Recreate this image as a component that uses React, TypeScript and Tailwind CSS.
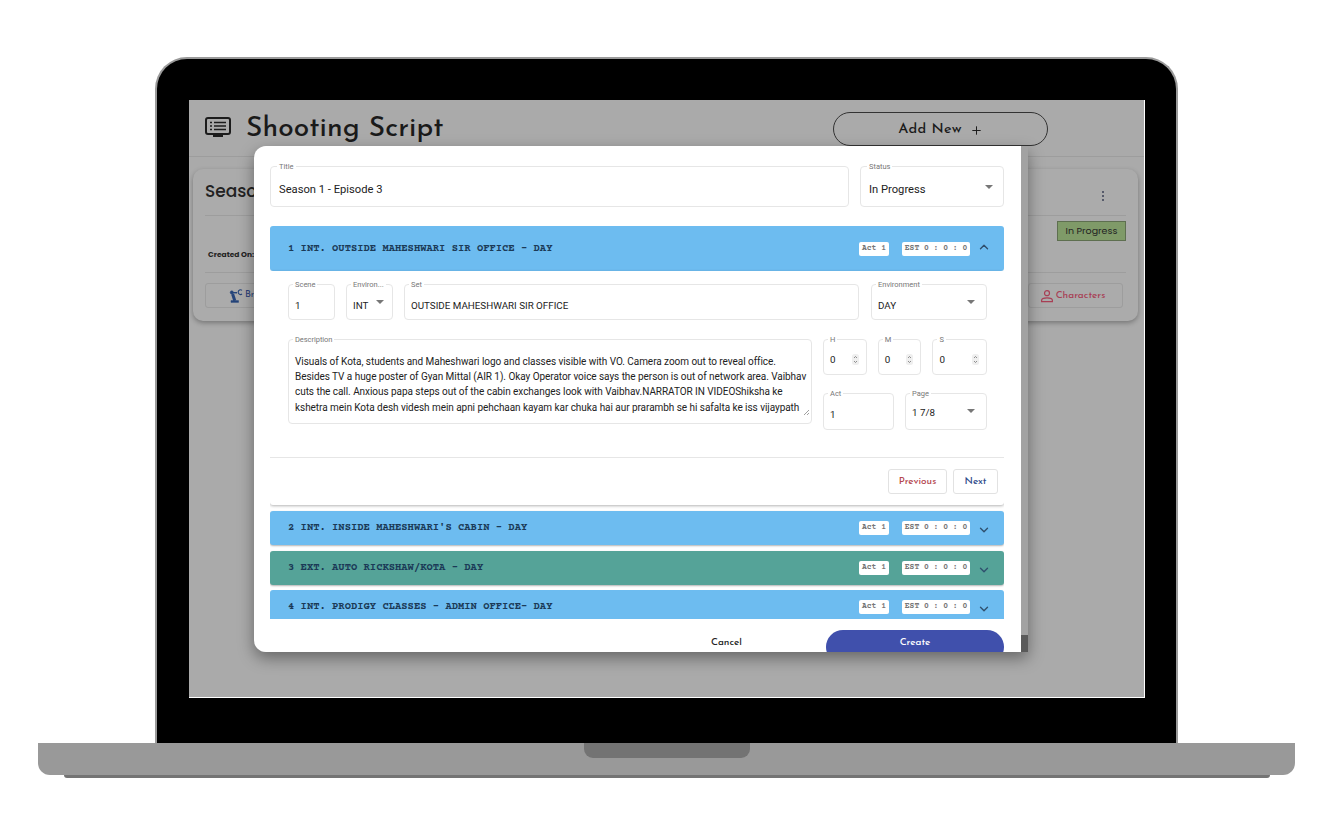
import React from "react";
import { ChevronDown, ChevronUp, Plus } from "lucide-react";

const roboto = "font-['Roboto','Liberation_Sans',sans-serif]";
const mono = "font-['Courier_Prime','Courier_New','Liberation_Mono',monospace]";
const geo = "font-['Josefin_Sans','Lato','Noto_Sans',sans-serif]";

function Caret({ className = "" }: { className?: string }) {
  return <span className={`block shrink-0 w-0 h-0 border-l-[4px] border-r-[4px] border-t-[4px] border-l-transparent border-r-transparent border-t-[#777] ${className}`} />;
}

function Spin() {
  return (
    <svg width="7" height="11" viewBox="0 0 7 11" fill="none" className="shrink-0 -mt-[1px]">
      <rect width="7" height="11" rx="2.5" fill="#efefef" />
      <path d="M2 4 3.5 2.5 5 4M2 7l1.5 1.5L5 7" stroke="#666" strokeWidth="0.7" />
    </svg>
  );
}

function Field({ label, className, children, size = "text-[9.8px]", pad = "pl-[6px] pr-[7px]", labelLeft = "left-[4px]" }: { label: string; className: string; children: React.ReactNode; size?: string; pad?: string; labelLeft?: string }) {
  return (
    <div className={`relative border border-[#e6e6e6] rounded-[4px] flex items-center ${pad} ${roboto} ${size} text-[#222] ${className}`}>
      <span className={`absolute -top-[5px] ${labelLeft} bg-white px-[2px] text-[7.5px] leading-[10px] text-[#777] whitespace-nowrap`}>{label}</span>
      {children}
    </div>
  );
}

function Chip({ children, className }: { children: React.ReactNode; className: string }) {
  return <span className={`h-[14px] bg-white rounded-[2px] flex items-center justify-center font-bold text-[8px] text-[#777] whitespace-pre ${className}`}>{children}</span>;
}

function SceneBar({ text, color, className, open }: { text: string; color: string; className: string; open?: boolean }) {
  return (
    <div className={`flex items-center pl-[18px] pr-[13px] rounded-[3px] shrink-0 ${color} ${className} ${mono}`}>
      <span className="text-[10.5px] font-bold text-[#1b3a57] whitespace-pre flex-1 mt-[2px]">{text}</span>
      <Chip className="w-[30px] mr-[13px]">Act 1</Chip>
      <Chip className="w-[68px] mr-[7px]">EST 0 : 0 : 0</Chip>
      {open ? <ChevronUp size={14} strokeWidth={2.4} className="text-[#30506e] -mt-[3px]" /> : <ChevronDown size={14} strokeWidth={2.4} className="text-[#30506e] mt-[4px]" />}
    </div>
  );
}

export default function App() {
  return (
    <div className="w-[1338px] h-[838px] bg-white overflow-hidden pt-[57px]">
      {/* lid */}
      <div className="ml-[155px] w-[1023px] h-[686px] bg-black border-t-[2px] border-x-[2px] border-[#9a9a9a] rounded-t-[32px] pt-[41px] pl-[32px]">
        {/* screen */}
        <div className="relative w-[956px] h-[598px] bg-[#aaaaaa] border-r border-b border-white overflow-hidden">
          <div className="flex items-center h-[57px] border-b border-[#9d9d9d] pl-[16px] pr-[96px]">
            <svg width="26" height="22" viewBox="0 0 26 22" fill="none" className="text-[#1c1c1c] -mt-[3px]">
              <rect x="1" y="2" width="24" height="16" rx="2" stroke="currentColor" strokeWidth="2" />
              <path d="M5 6.5h2M5 10h2M5 13.5h2M9 6.5h12M9 10h12M9 13.5h12" stroke="currentColor" strokeWidth="1.7" />
              <path d="M8 18h10v3H8z" fill="currentColor" />
            </svg>
            <span className={`ml-[15px] mt-[1px] text-[28px] font-medium tracking-[0.1px] text-[#1a1a1a] ${geo}`}>Shooting Script</span>
            <div className={`ml-auto mt-[2px] w-[215px] h-[34px] rounded-full border border-[#333] flex items-center justify-center gap-[8px] text-[14.5px] font-medium tracking-[0.3px] text-[#1a1a1a] ${geo}`}>
              <span className="mt-[1px]">Add New</span> <Plus size={13} strokeWidth={1.8} className="mt-[2px]" />
            </div>
          </div>
          <div className="ml-[4px] mt-[12px] w-[945px] h-[152px] rounded-[10px] bg-[#ababab] shadow-[0_2px_5px_rgba(0,0,0,0.3)] px-[12px] font-['Poppins','Inter',sans-serif]">
            <div className="flex items-center justify-between h-[47px] border-b border-[#9d9d9d] pr-[22px]">
              <span className="text-[17px] font-medium text-[#222]">Season 1</span>
              <span className="flex flex-col gap-[1.5px] mt-[8px]">
                <i className="block w-[2.5px] h-[2.5px] rounded-full bg-[#3a3f55]" />
                <i className="block w-[2.5px] h-[2.5px] rounded-full bg-[#3a3f55]" />
                <i className="block w-[2.5px] h-[2.5px] rounded-full bg-[#3a3f55]" />
              </span>
            </div>
            <div className="flex justify-between h-[57px] border-b border-[#9d9d9d]">
              <span className="mt-[33px] ml-[3px] text-[7.5px] font-bold text-[#222]">Created On:</span>
              <span className="mt-[5px] mr-0 w-[69px] h-[20px] bg-[#7f9a68] border border-[#5e6f50] flex items-center justify-center text-[9.5px] text-[#222]">In Progress</span>
            </div>
            <div className="flex justify-between items-center pt-[10px]">
              <div className={`w-[100px] h-[25px] border border-[#9d9d9d] rounded-[3px] flex items-center pl-[23px] text-[9.5px] text-[#2c3f78] ${geo}`}>
                <svg width="15" height="14" viewBox="0 0 15 14" fill="none" stroke="#25447a">
                  <path d="M2 13.4h7.5v-1.8H2z" fill="#25447a" strokeWidth="0.5" />
                  <path d="M5.8 11.8 3.6 5" strokeWidth="3" />
                  <circle cx="2.8" cy="3.4" r="1.6" fill="#25447a" strokeWidth="0.5" />
                  <path d="M2.8 3.6 8 3.8" strokeWidth="1.4" />
                  <path d="M13 1.4A2.3 2.3 0 0 0 9.2 3.2 2.3 2.3 0 0 0 13 5" strokeWidth="1.1" />
                </svg>
                <span className="ml-[1px]">Breakdown</span>
              </div>
              <div className={`w-[95px] h-[25px] mr-[3px] border border-[#9d9d9d] rounded-[3px] flex items-center justify-center gap-[2px] pr-[6px] text-[10px] font-medium text-[#a83f55] ${geo}`}>
                <svg width="14" height="14" viewBox="0 0 14 14" fill="none" stroke="currentColor" strokeWidth="1.2">
                  <circle cx="7" cy="4.2" r="2.5" />
                  <path d="M1.6 12.6v-1.2c0-1.5 2.6-2.5 5.4-2.5s5.4 1 5.4 2.5v1.2z" />
                </svg>
                Characters
              </div>
            </div>
          </div>

          {/* modal */}
          <div className="absolute left-[65px] top-[46px] w-[774px] h-[506px] flex shadow-[0_6px_16px_rgba(0,0,0,0.4)] rounded-l-[12px] overflow-hidden">
            <div className="w-[767px] h-full bg-white flex flex-col pl-[16px] pr-[17px] relative">
              <div className="flex gap-[11px] pt-[20px] shrink-0">
                <Field label="Title" labelLeft="left-[6px]" className="w-[579px] h-[41px] pt-[8px]" pad="pl-[8px] pr-[8px]" size="text-[11.2px]"><span>Season 1 - Episode 3</span></Field>
                <Field label="Status" labelLeft="left-[6px]" className="w-[144px] h-[41px] justify-between pt-[8px]" pad="pl-[8px] pr-[10px]" size="text-[11.2px]"><span>In Progress</span><Caret className="-mt-[7px]" /></Field>
              </div>
              <div className="h-[393px] overflow-hidden mt-[19px]">
                <SceneBar text="1 INT. OUTSIDE MAHESHWARI SIR OFFICE - DAY" color="bg-[#6dbcf0]" className="h-[45px]" open />
                <div className="h-[234px] bg-white shadow-[0_1px_3px_rgba(0,0,0,0.3)] rounded-b-[3px] flex flex-col">
                  <div className="flex gap-[11px] pt-[13px] pl-[18px]">
                    <Field label="Scene" className="w-[47px] h-[36px] pt-[8px]">1</Field>
                    <Field label="Environ..." className="w-[47px] h-[36px] justify-between pt-[8px]"><span>INT</span><Caret className="-mt-[9px] mr-[1px]" /></Field>
                    <Field label="Set" className="w-[455px] h-[36px] pt-[8px]">OUTSIDE MAHESHWARI SIR OFFICE</Field>
                    <Field label="Environment" className="w-[116px] h-[36px] justify-between ml-[1px] pt-[8px]"><span>DAY</span><Caret className="mr-[4px] -mt-[9px]" /></Field>
                  </div>
                  <div className="flex gap-[11px] pt-[19px] pl-[18px] h-[98px] box-content pb-[20px] border-b border-[#e6e6e6]">
                    <Field label="Description" size="text-[10px]" className="relative w-[524px] h-[85px] items-start pt-[14px] leading-[15.2px] tracking-[-0.05px] whitespace-nowrap">
                      <span>
                        Visuals of Kota, students and Maheshwari logo and classes visible with VO. Camera zoom out to reveal office.<br />
                        Besides TV a huge poster of Gyan Mittal (AIR 1). Okay Operator voice says the person is out of network area. Vaibhav<br />
                        cuts the call. Anxious papa steps out of the cabin exchanges look with Vaibhav.NARRATOR IN VIDEOShiksha ke<br />
                        kshetra mein Kota desh videsh mein apni pehchaan kayam kar chuka hai aur prarambh se hi safalta ke iss vijaypath
                      </span>
                      <svg width="5" height="5" viewBox="0 0 5 5" className="absolute right-[2px] bottom-[8px]" stroke="#777" strokeWidth="0.7"><path d="M0 5 5 0M3 5 5 3" /></svg>
                    </Field>
                    <div className="w-[164px] flex flex-col gap-[18px]">
                      <div className="flex gap-[11px]">
                        <Field label="H" className="w-[44px] h-[36px] justify-between pt-[6px]"><span>0</span><Spin /></Field>
                        <Field label="M" className="w-[44px] h-[36px] justify-between pt-[6px]"><span>0</span><Spin /></Field>
                        <Field label="S" className="w-[55px] h-[36px] justify-between pt-[6px]"><span>0</span><Spin /></Field>
                      </div>
                      <div className="flex gap-[11px]">
                        <Field label="Act" className="w-[71px] h-[37px] pt-[7px]">1</Field>
                        <Field label="Page" className="w-[82px] h-[37px] justify-between pt-[4px]"><span>1 7/8</span><Caret className="mr-[4px] -mt-[6px]" /></Field>
                      </div>
                    </div>
                  </div>
                  <div className={`flex justify-end gap-[6px] pt-[11px] pr-[6px] text-[10px] font-medium ${geo}`}>
                    <span className="w-[59px] h-[25px] border border-[#e2e2e2] rounded-[3px] flex items-center justify-center text-[#b5474f]">Previous</span>
                    <span className="w-[45px] h-[25px] border border-[#e2e2e2] rounded-[3px] flex items-center justify-center text-[#2f4a8a]">Next</span>
                  </div>
                </div>
                <SceneBar text="2 INT. INSIDE MAHESHWARI'S CABIN - DAY" color="bg-[#6dbcf0] shadow-[0_1px_2px_rgba(0,0,0,0.3)]" className="h-[34px] mt-[6px]" />
                <SceneBar text="3 EXT. AUTO RICKSHAW/KOTA - DAY" color="bg-[#55a398] shadow-[0_1px_2px_rgba(0,0,0,0.3)]" className="h-[34px] mt-[6px]" />
                <SceneBar text="4 INT. PRODIGY CLASSES - ADMIN OFFICE- DAY" color="bg-[#6dbcf0]" className="h-[34px] mt-[5px]" />
              </div>
              <div className={`absolute left-[16px] top-[484px] w-[734px] flex text-[10px] font-medium ${geo}`}>
                <span className="ml-[441px] w-[30px] text-center text-[#222] mt-[5px] whitespace-nowrap">Cancel</span>
                <span className="ml-[85px] w-[178px] h-[34px] rounded-full bg-[#4050ac] text-white flex items-start pt-[5px] justify-center">Create</span>
              </div>
            </div>
            <div className="w-[7px] h-full flex flex-col bg-[#5a5a5a]">
              <div className="h-[489px] bg-[#a2a2a2]" />
            </div>
          </div>
        </div>
      </div>
      {/* base */}
      <div className="relative ml-[38px] w-[1257px] h-[32px] bg-[#999999] rounded-b-[12px] flex justify-center">
        <div className="w-[166px] h-[15px] bg-[#737373] rounded-b-[9px]" />
      </div>
      <div className="ml-[64px] w-[1206px] h-[3px] bg-[#747474] rounded-b-[3px]" />
    </div>
  );
}
